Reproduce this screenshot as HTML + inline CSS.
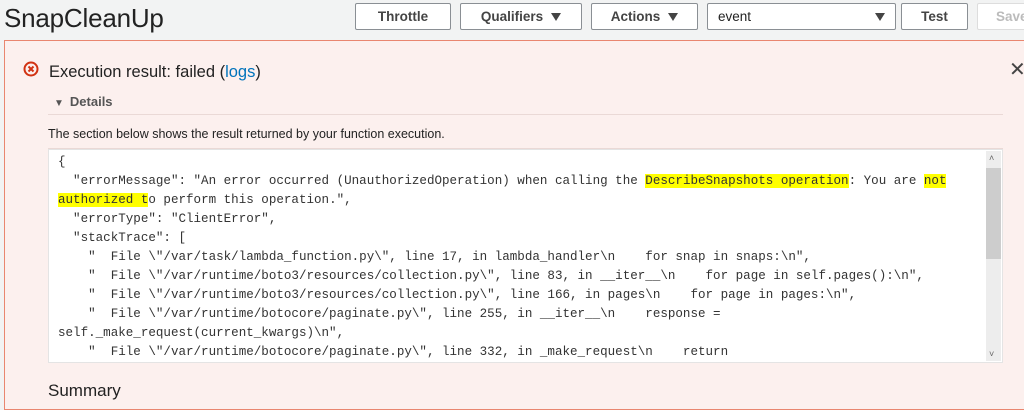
<!DOCTYPE html>
<html><head><meta charset="utf-8"><style>
*{box-sizing:border-box;margin:0;padding:0}
body{width:1024px;height:400px;overflow:hidden;background:#f2f3f3;font-family:"Liberation Sans",sans-serif;position:relative;color:#222}
.title{position:absolute;left:4px;top:3px;font-size:26px;color:#222;letter-spacing:-0.2px}
.btn{position:absolute;top:3px;height:27px;border:1px solid #8a8f94;background:#fff;border-radius:2px;font-size:13.5px;font-weight:bold;color:#444;text-align:center;line-height:25px}
.tri{display:inline-block;width:0;height:0;border-left:5px solid transparent;border-right:5px solid transparent;border-top:8px solid #444;margin-left:8px;vertical-align:0}
.panel{position:absolute;left:4px;top:40px;width:1030px;height:370px;border:1px solid #e9866f;background:#fcf0ee}
.code{position:absolute;left:48px;top:149px;width:955px;height:214px;background:#fff;border:1px solid #e4e4e4;overflow:hidden}
pre{font-family:"Liberation Mono",monospace;font-size:12.55px;line-height:19px;color:#333;position:absolute;left:9px;top:3px;white-space:pre}
.hl{background:#ffff00}
.sb{position:absolute;right:1px;top:1px;width:15px;height:210px;background:#ededed}
.thumb{position:absolute;left:0;top:17px;width:15px;height:91px;background:#cdcdcd}
</style></head><body>
<div class="title">SnapCleanUp</div>
<div class="btn" style="left:355px;width:96px">Throttle</div>
<div class="btn" style="left:460px;width:122px">Qualifiers<span class="tri"></span></div>
<div class="btn" style="left:591px;width:107px">Actions<span class="tri"></span></div>
<div class="btn" style="left:707px;width:189px;text-align:left;padding-left:10px;font-weight:normal;color:#222">event<span class="tri" style="position:absolute;right:10px;top:9px"></span></div>
<div class="btn" style="left:901px;width:67px">Test</div>
<div class="btn" style="left:977px;width:70px;color:#bbb;border-color:#ddd;text-align:left;padding-left:18px">Save</div>
<div class="panel"></div>
<svg style="position:absolute;left:23px;top:61px" width="16" height="16" viewBox="0 0 16 16"><circle cx="8" cy="8" r="6.5" fill="none" stroke="#d13212" stroke-width="2"/><path d="M5.5 5.5L10.5 10.5M10.5 5.5L5.5 10.5" stroke="#d13212" stroke-width="2"/></svg>
<div style="position:absolute;left:49px;top:63px;font-size:16.5px;color:#222">Execution result: failed (<span style="color:#0073bb">logs</span>)</div>
<div style="position:absolute;left:1009px;top:57px;font-size:20px;color:#444">✕</div>
<div style="position:absolute;left:54px;top:94px;font-size:13px;font-weight:bold;color:#555"><span style="font-size:10px;margin-right:6px">▼</span>Details</div>
<div style="position:absolute;left:48px;top:114px;width:955px;border-top:1px solid #ead9d6"></div>
<div style="position:absolute;left:48px;top:127px;font-size:12.5px;color:#222">The section below shows the result returned by your function execution.</div>
<div style="position:absolute;left:48px;top:148px;width:955px;border-top:1px solid #ead9d6"></div>
<div class="code"><pre>{
  "errorMessage": "An error occurred (UnauthorizedOperation) when calling the <span class="hl">DescribeSnapshots operation</span>: You are <span class="hl">not</span>
<span class="hl">authorized t</span>o perform this operation.",
  "errorType": "ClientError",
  "stackTrace": [
    "  File \"/var/task/lambda_function.py\", line 17, in lambda_handler\n    for snap in snaps:\n",
    "  File \"/var/runtime/boto3/resources/collection.py\", line 83, in __iter__\n    for page in self.pages():\n",
    "  File \"/var/runtime/boto3/resources/collection.py\", line 166, in pages\n    for page in pages:\n",
    "  File \"/var/runtime/botocore/paginate.py\", line 255, in __iter__\n    response =
self._make_request(current_kwargs)\n",
    "  File \"/var/runtime/botocore/paginate.py\", line 332, in _make_request\n    return</pre>
<div class="sb"><div class="thumb"></div><div style="position:absolute;top:2px;left:3px;font-size:9px;color:#666">˄</div><div style="position:absolute;bottom:2px;left:3px;font-size:9px;color:#666">˅</div></div></div>
<div style="position:absolute;left:48px;top:381px;font-size:17px;color:#222">Summary</div>
</body></html>
